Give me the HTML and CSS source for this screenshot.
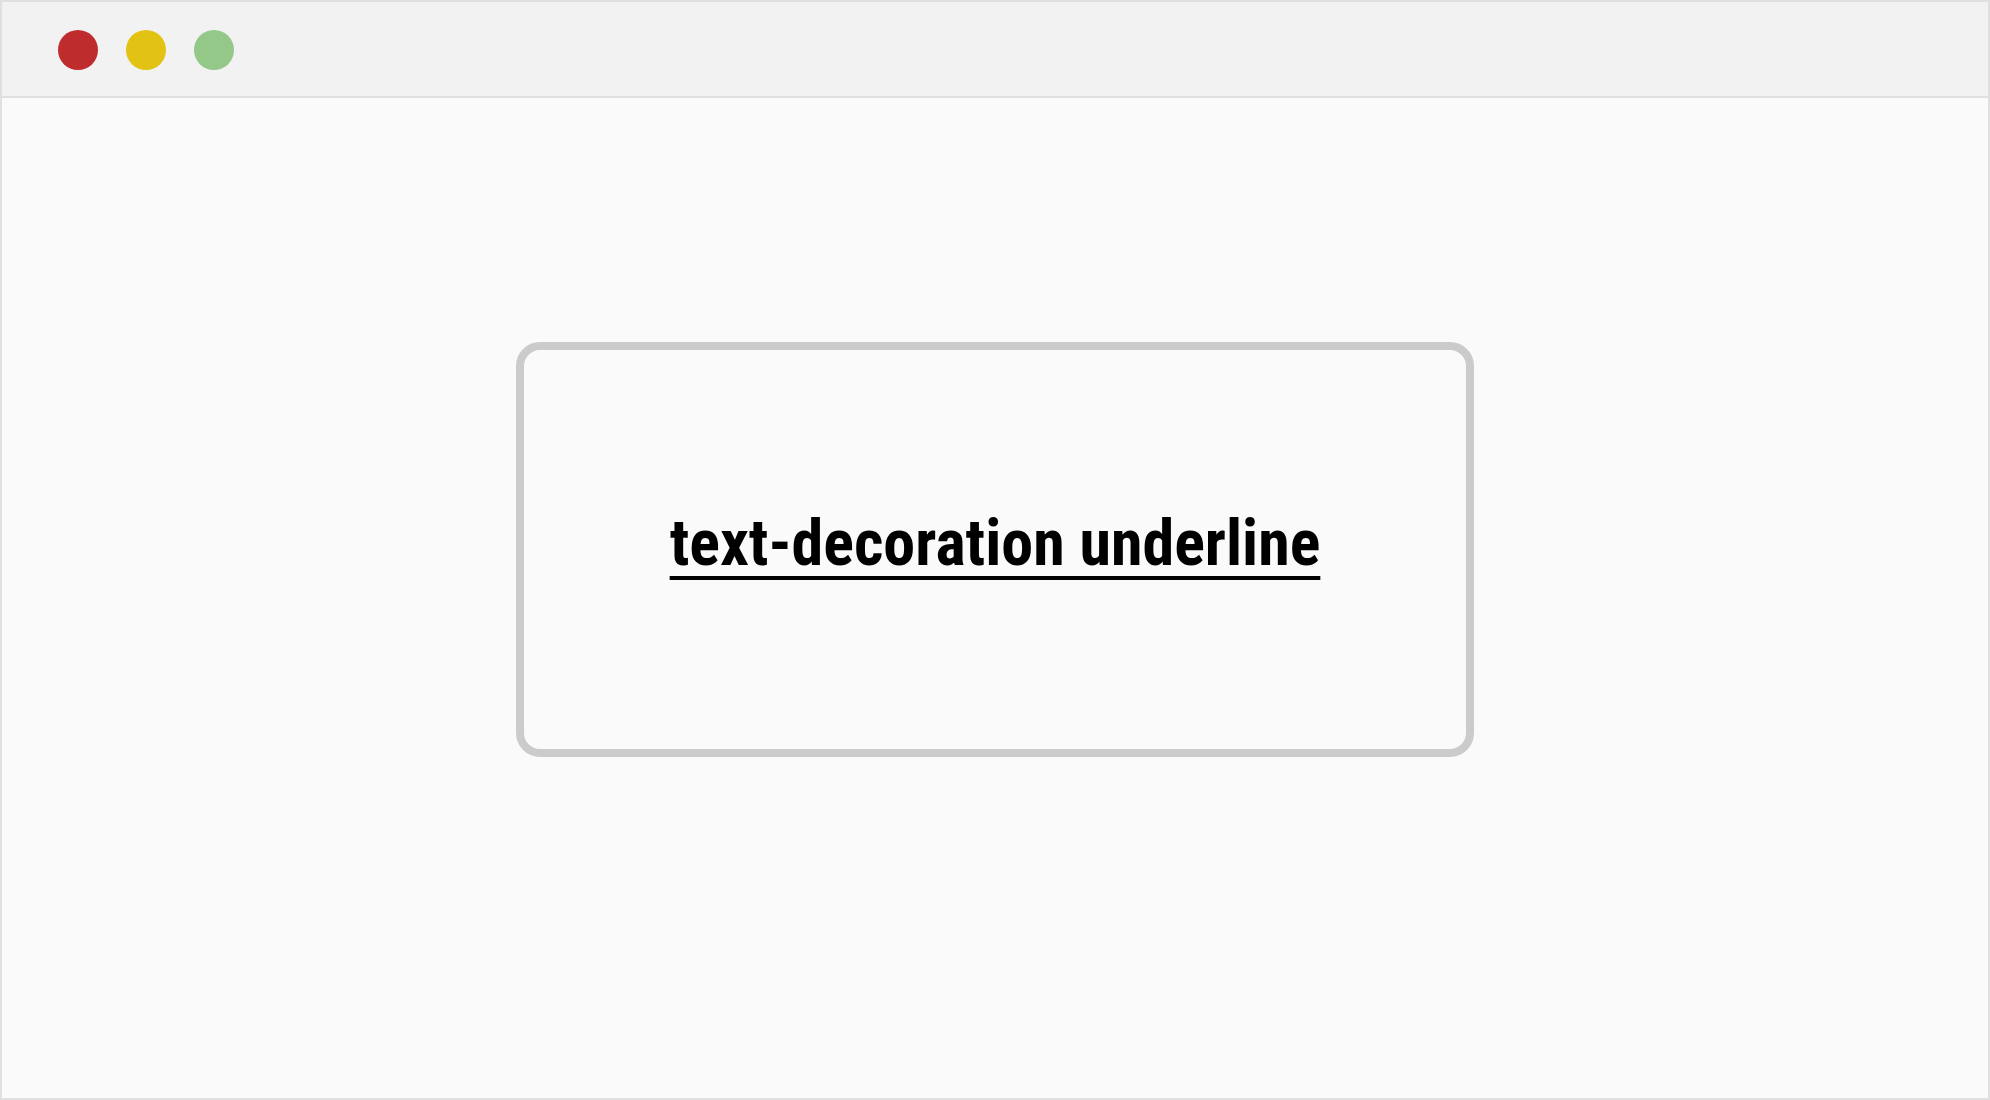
FILE: index.html
```html
<!DOCTYPE html>
<html lang="en">
<head>
<meta charset="utf-8">
<title>text-decoration underline</title>
<link rel="stylesheet" href="styles.css">
</head>
<body>
  <div class="window">
    <div class="titlebar">
      <span class="dot dot-close"></span>
      <span class="dot dot-min"></span>
      <span class="dot dot-max"></span>
    </div>
    <main class="stage">
      <section class="card">
        <h1 class="label">text-decoration underline</h1>
      </section>
    </main>
  </div>
</body>
</html>
```

FILE: styles.css
```css
* {
  box-sizing: border-box;
}

html,
body {
  margin: 0;
  height: 100%;
  background: #fafafa;
}

.window {
  height: 100vh;
  border: 2px solid #e0e0e0;
  display: flex;
  flex-direction: column;
  background: #fafafa;
}

.titlebar {
  height: 96px;
  flex: none;
  background: #f2f2f2;
  border-bottom: 2px solid #e0e0e0;
  display: flex;
  align-items: center;
  gap: 28px;
  padding-left: 56px;
  padding-top: 2px;
}

.dot {
  width: 40px;
  height: 40px;
  border-radius: 50%;
  display: block;
}

.dot-close { background: #bf2c2e; }
.dot-min { background: #e2c213; }
.dot-max { background: #94c888; }

.stage {
  flex: 1;
  display: flex;
  justify-content: center;
  padding-top: 244px;
}

.card {
  width: 958px;
  height: 415px;
  border: 8px solid #cbcbcb;
  border-radius: 24px;
  display: flex;
  align-items: center;
  justify-content: center;
  padding-bottom: 11px;
}

.label {
  margin: 0;
  font-family: "Roboto Condensed", "DejaVu Sans Condensed", Roboto, sans-serif;
  font-stretch: condensed;
  font-weight: 700;
  font-size: 64px;
  line-height: 1;
  color: #000;
  text-decoration: underline;
  text-decoration-thickness: 4px;
  text-underline-offset: 11px;
}
```
